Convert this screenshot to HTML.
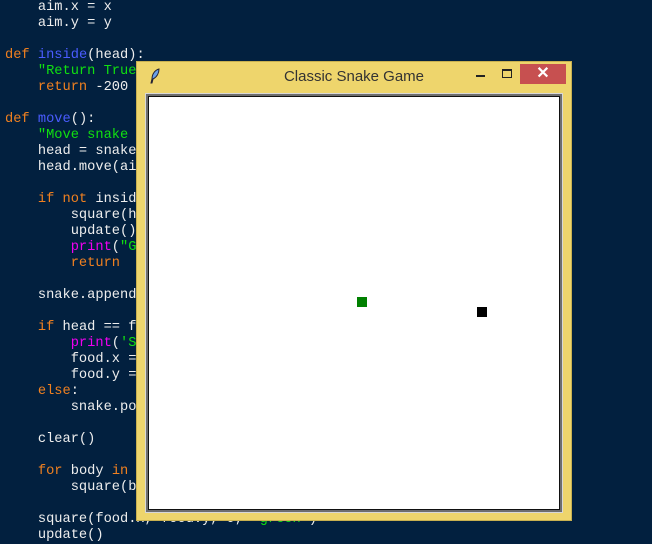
<!DOCTYPE html>
<html><head><meta charset="utf-8"><style>
body{margin:0;width:652px;height:540px;background:#02203f;overflow:hidden;position:relative}
pre{margin:0;position:absolute;left:5px;top:0px;font-family:"Liberation Mono",monospace;font-size:13.7px;line-height:16px;color:#eeeeee}
.k{color:#f08020}.f{color:#4a5cff}.s{color:#10e010}.p{color:#f000f0}
.win{position:absolute;left:136px;top:61px;width:434px;height:458px;background:#eed56c;border:1px solid #c8b050}
.title{position:absolute;left:0;right:0;top:6px;text-align:center;font-family:"Liberation Sans",sans-serif;font-size:15px;color:#333}
.close{position:absolute;left:383px;top:2px;width:46px;height:20px;background:#c75050;color:#fff;text-align:center;font:bold 16px/20px "Liberation Sans",sans-serif}
.min{position:absolute;left:339px;top:13px;width:9px;height:2px;background:#222}
.max{position:absolute;left:365px;top:7px;width:8px;height:6px;border:1px solid #222;border-top-width:2px}
.cv{position:absolute;left:8px;top:31px;width:416px;height:418px;background:#fff;border:1px solid #d8d8d8;box-shadow:inset 0 0 0 2px #6e6e6e,inset 0 0 0 3px #111}
.sq{position:absolute;width:10px;height:10px}
</style></head><body>
<pre>    aim.x = x
    aim.y = y

<span class="k">def</span> <span class="f">inside</span>(head):
    <span class="s">"Return True if head inside boundaries."</span>
    <span class="k">return</span> -200 &lt; head.x &lt; 190
    
<span class="k">def</span> <span class="f">move</span>():
    <span class="s">"Move snake forward one segment."</span>
    head = snake[-1].copy()
    head.move(aim)

    <span class="k">if not</span> inside(head):
        square(head.x, head.y)
        update()
        <span class="p">print</span>(<span class="s">"Game over"</span>)
        <span class="k">return</span>

    snake.append(head)

    <span class="k">if</span> head == food:
        <span class="p">print</span>(<span class="s">'Snake:'</span>, len(snake))
        food.x = randrange(-15, 15)
        food.y = randrange(-15, 15)
    <span class="k">else</span>:
        snake.pop(0)

    clear()

    <span class="k">for</span> body <span class="k">in</span> snake:
        square(body.x, body.y, 9, 'black')

    square(food.x, food.y, 9, <span class="s">'green'</span>)
    update()</pre>
<div class="win">
<svg style="position:absolute;left:12px;top:6px" width="12" height="16" viewBox="0 0 12 16"><path d="M10 1 C6 2 3 6 3 11 L2 15 L3 15 L4 11 C8 9 10 5 10 1Z" fill="#6aa0e8" stroke="#223" stroke-width="1"/></svg>
<div class="title">Classic Snake Game</div>
<div class="min"></div><div class="max"></div>
<div class="close">✕</div>
<div class="cv">
<div class="sq" style="left:211px;top:203px;background:#008000"></div>
<div class="sq" style="left:331px;top:213px;background:#000"></div>
</div>
</div>
</body></html>
